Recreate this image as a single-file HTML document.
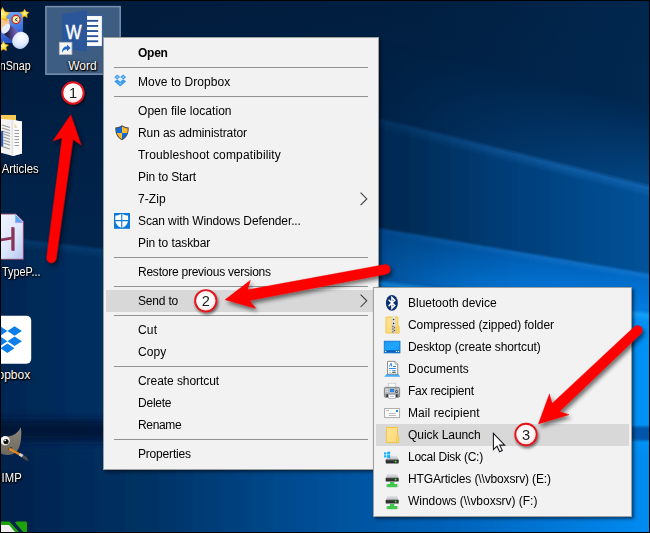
<!DOCTYPE html>
<html lang="en">
<head>
<meta charset="utf-8">
<title>Send to Quick Launch</title>
<style>
html,body{margin:0;padding:0;}
body{width:650px;height:533px;overflow:hidden;position:relative;background:#000;font-family:"Liberation Sans",sans-serif;font-size:12px;color:#000;}
#desk{position:absolute;left:0;top:0;width:650px;height:533px;overflow:hidden;background:#01214a;}
#wall{position:absolute;left:0;top:0;width:650px;height:533px;}
#frame{position:absolute;left:0;top:0;width:650px;height:533px;box-sizing:border-box;border:1px solid #000;pointer-events:none;}
.abs{position:absolute;}
svg{position:absolute;overflow:visible;}
.menu{position:absolute;background:#f2f2f2;border:1px solid #a0a0a0;box-sizing:border-box;box-shadow:2px 2px 3px rgba(0,0,0,.5);}
.mi{position:absolute;height:22px;line-height:22px;white-space:nowrap;font-size:12px;color:#000;will-change:transform;}
.sep{position:absolute;height:1px;background:#929292;}
.hl{position:absolute;background:#d8d8d8;height:22px;}
.lbl{position:absolute;color:#fff;font-size:12px;line-height:14px;white-space:nowrap;text-shadow:1px 1px 1px #000,0 0 3px rgba(0,0,0,.9),0 1px 2px #000;}
</style>
</head>
<body>
<div id="desk">
<svg id="wall" width="650" height="533" viewBox="0 0 650 533">
<defs>
<linearGradient id="w0" gradientUnits="userSpaceOnUse" x1="0" y1="0" x2="650" y2="0"><stop offset="0.0000" stop-color="#011a3a"/><stop offset="0.6462" stop-color="#011f40"/><stop offset="1.0000" stop-color="#01274e"/></linearGradient>
<linearGradient id="w0v" gradientUnits="userSpaceOnUse" x1="0" y1="0" x2="0" y2="230"><stop offset="0" stop-color="#012a58" stop-opacity="0"/><stop offset="1" stop-color="#012a58" stop-opacity="0.6"/></linearGradient>
<linearGradient id="w1g" gradientUnits="userSpaceOnUse" x1="500.0" y1="149.1" x2="519.3" y2="71.5"><stop offset="0" stop-color="#035298" stop-opacity="0.7"/><stop offset="1" stop-color="#035298" stop-opacity="0"/></linearGradient>
<linearGradient id="w1" gradientUnits="userSpaceOnUse" x1="0" y1="0" x2="650" y2="0"><stop offset="0.3538" stop-color="#01264e" stop-opacity="0"/><stop offset="0.5846" stop-color="#012850"/><stop offset="0.6462" stop-color="#012e5a"/><stop offset="0.7692" stop-color="#013c76"/><stop offset="0.9538" stop-color="#014e92"/><stop offset="1.0000" stop-color="#01539a"/></linearGradient>
<linearGradient id="w1s" gradientUnits="userSpaceOnUse" x1="500.0" y1="146.1" x2="496.6" y2="159.7"><stop offset="0" stop-color="#2882d7" stop-opacity="0"/><stop offset="0.3" stop-color="#2882d7" stop-opacity="0.38"/><stop offset="1" stop-color="#2882d7" stop-opacity="0"/></linearGradient>
<linearGradient id="w2" gradientUnits="userSpaceOnUse" x1="0" y1="0" x2="650" y2="0"><stop offset="0.3538" stop-color="#013264" stop-opacity="0"/><stop offset="0.5846" stop-color="#014284"/><stop offset="0.6462" stop-color="#014a8e"/><stop offset="0.8000" stop-color="#015cb0"/><stop offset="0.9538" stop-color="#0467c2"/><stop offset="1.0000" stop-color="#056ac8"/></linearGradient>
<linearGradient id="w2g" gradientUnits="userSpaceOnUse" x1="500.0" y1="248.8" x2="493.0" y2="290.2"><stop offset="0" stop-color="#0482e8" stop-opacity="0"/><stop offset="1" stop-color="#0482e8" stop-opacity="0.85"/></linearGradient>
<linearGradient id="w2s" gradientUnits="userSpaceOnUse" x1="500.0" y1="246.8" x2="498.5" y2="255.6"><stop offset="0" stop-color="#3c96e6" stop-opacity="0"/><stop offset="0.35" stop-color="#3c96e6" stop-opacity="0.25"/><stop offset="1" stop-color="#3c96e6" stop-opacity="0"/></linearGradient>
<linearGradient id="w3" gradientUnits="userSpaceOnUse" x1="0" y1="0" x2="650" y2="0"><stop offset="0.0000" stop-color="#012652"/><stop offset="0.1231" stop-color="#012e5e"/><stop offset="0.2308" stop-color="#013468"/><stop offset="0.4615" stop-color="#014e96"/><stop offset="0.6892" stop-color="#0066be"/><stop offset="0.9200" stop-color="#0086ec"/><stop offset="1.0000" stop-color="#0092f6"/></linearGradient>
<linearGradient id="w3s" gradientUnits="userSpaceOnUse" x1="500.0" y1="293.4" x2="498.6" y2="305.3"><stop offset="0" stop-color="#28afff" stop-opacity="0"/><stop offset="0.35" stop-color="#28afff" stop-opacity="0.5"/><stop offset="1" stop-color="#28afff" stop-opacity="0"/></linearGradient>
<linearGradient id="wb" gradientUnits="userSpaceOnUse" x1="0" y1="0" x2="650" y2="0"><stop offset="0.0000" stop-color="#01224c"/><stop offset="0.0462" stop-color="#01244f"/><stop offset="0.1077" stop-color="#022a58"/><stop offset="0.2308" stop-color="#013264"/><stop offset="0.4615" stop-color="#014c92"/><stop offset="0.6892" stop-color="#0062b8"/><stop offset="0.9200" stop-color="#0080e4"/><stop offset="1.0000" stop-color="#008cf2"/></linearGradient>
<linearGradient id="wband" gradientUnits="userSpaceOnUse" x1="0" y1="0" x2="650" y2="0"><stop offset="0.0000" stop-color="#001636"/><stop offset="0.3077" stop-color="#001a3e"/><stop offset="0.6154" stop-color="#012c60"/></linearGradient>
<linearGradient id="mf1g" gradientUnits="userSpaceOnUse" x1="380" y1="0" x2="650" y2="0"><stop offset="0" stop-color="#000"/><stop offset="1" stop-color="#fff"/></linearGradient><mask id="mf1"><rect x="0" y="0" width="650" height="533" fill="url(#mf1g)"/></mask>
<linearGradient id="mf2g" gradientUnits="userSpaceOnUse" x1="330" y1="0" x2="560" y2="0"><stop offset="0" stop-color="#000"/><stop offset="1" stop-color="#fff"/></linearGradient><mask id="mf2"><rect x="0" y="0" width="650" height="533" fill="url(#mf2g)"/></mask>
<linearGradient id="mf3g" gradientUnits="userSpaceOnUse" x1="100" y1="0" x2="500" y2="0"><stop offset="0" stop-color="#333"/><stop offset="1" stop-color="#fff"/></linearGradient><mask id="mf3"><rect x="0" y="0" width="650" height="533" fill="url(#mf3g)"/></mask>
<filter id="b2" x="-10%" y="-10%" width="120%" height="120%"><feGaussianBlur stdDeviation="1.3"/></filter>
<filter id="b5" x="-10%" y="-60%" width="120%" height="220%"><feGaussianBlur stdDeviation="4.5"/></filter>
</defs>
<rect x="0" y="0" width="650" height="533" fill="url(#w0)"/>
<rect x="0" y="0" width="650" height="533" fill="url(#w0v)"/>
<g mask="url(#mf1)"><polygon points="-10,-68.0 660,99.0 660,189.0 -10,22.0" fill="url(#w1g)"/></g>
<polygon points="-10,22.0 660,189.0 660,545 -10,545" fill="url(#w1)" filter="url(#b2)"/>
<g mask="url(#mf2)"><polygon points="-10,18.0 660,185.0 660,201.0 -10,34.0" fill="url(#w1s)"/></g>
<polygon points="-10,162.0 660,276.0 660,545 -10,545" fill="url(#w2)" filter="url(#b2)"/>
<g mask="url(#mf2)"><polygon points="-10,162.0 660,276.0 660,545 -10,545" fill="url(#w2g)"/><polygon points="-10,159.0 660,273.0 660,284.0 -10,170.0" fill="url(#w2s)"/></g>
<polygon points="-10,235.5 660,315.5 660,545 -10,545" fill="url(#w3)" filter="url(#b2)"/>
<g mask="url(#mf3)"><polygon points="-10,231.5 660,311.5 660,325.5 -10,245.5" fill="url(#w3s)"/></g>
<rect x="-10" y="448" width="670" height="100" fill="url(#wb)" filter="url(#b5)"/>
<rect x="-10" y="420" width="410" height="21" fill="url(#wband)" filter="url(#b5)"/>
<rect x="380" y="426.500" width="280" height="14" fill="#0356aa" filter="url(#b2)"/>
</svg>

<svg width="650" height="533" viewBox="0 0 650 533" style="left:0;top:0;">
<defs>
<linearGradient id="wsb" x1="0" y1="0" x2="0.3" y2="1"><stop offset="0" stop-color="#86b2f6"/><stop offset="0.55" stop-color="#4d82e6"/><stop offset="1" stop-color="#2a56c8"/></linearGradient>
<linearGradient id="wst" gradientUnits="userSpaceOnUse" x1="6" y1="36" x2="15" y2="27"><stop offset="0" stop-color="#2a2348"/><stop offset="0.5" stop-color="#5d4f9c"/><stop offset="1" stop-color="#8478c4"/></linearGradient>
<radialGradient id="wsc" cx="0.4" cy="0.35" r="0.8"><stop offset="0" stop-color="#ffffff"/><stop offset="0.6" stop-color="#dfe9ff"/><stop offset="1" stop-color="#9db8f2"/></radialGradient>
<radialGradient id="star" cx="0.5" cy="0.45" r="0.6"><stop offset="0" stop-color="#fff6a0"/><stop offset="0.6" stop-color="#ffd92a"/><stop offset="1" stop-color="#f0a010"/></radialGradient>
<linearGradient id="tpg" x1="0" y1="0" x2="1" y2="1"><stop offset="0" stop-color="#f4f7ff"/><stop offset="0.6" stop-color="#dde6fb"/><stop offset="1" stop-color="#b4c6f2"/></linearGradient>
<linearGradient id="gmp" x1="0" y1="0" x2="0" y2="1"><stop offset="0" stop-color="#8d877a"/><stop offset="1" stop-color="#6e695e"/></linearGradient>
<radialGradient id="eye" cx="0.45" cy="0.4" r="0.7"><stop offset="0" stop-color="#ffffff"/><stop offset="0.7" stop-color="#eeeeee"/><stop offset="1" stop-color="#aaaaaa"/></radialGradient>
<path id="st5" d="M0,-1 L0.31,-0.43 L0.95,-0.31 L0.5,0.16 L0.59,0.81 L0,0.53 L-0.59,0.81 L-0.5,0.16 L-0.95,-0.31 L-0.31,-0.43 Z"/>
</defs>
<rect x="45.900" y="6.600" width="74.300" height="67.600" fill="rgb(62,93,130)" stroke="rgb(120,144,176)" stroke-width="1.500"/>
<!-- WinSnap -->
<g>
<rect x="-8" y="12" width="31" height="31" rx="2" fill="url(#wsb)"/>
<path d="M-8,19 L9,19 L10,27 L2,31 L-8,31 Z" fill="#f9c493"/>
<use href="#st5" transform="translate(2.5,15) scale(7.5)" fill="url(#star)" stroke="#f0a818" stroke-width="0.08"/>
<use href="#st5" transform="translate(24.6,13.8) scale(4.6)" fill="url(#star)" stroke="#f0a818" stroke-width="0.1"/>
<circle cx="16" cy="19.5" r="4.1" fill="#f4f0a8" stroke="#d3201c" stroke-width="1.3"/>
<path d="M17.6,18 L15,19.6 L17.6,21.2" fill="none" stroke="#33305a" stroke-width="1"/>
<g transform="rotate(38 13 35)">
<rect x="1" y="29" width="20" height="11" rx="5" fill="url(#wst)"/>
<ellipse cx="3.5" cy="34.5" rx="3.4" ry="5.6" fill="#e6eeff"/>
<rect x="14.5" y="25.800" width="15.500" height="17.600" rx="7.700" fill="url(#wsc)"/>
</g>
<use href="#st5" transform="translate(3.5,46.5) scale(5.2)" fill="url(#star)" stroke="#f0a818" stroke-width="0.1"/>
</g>
<!-- Word -->
<g>
<rect x="86" y="15.6" width="16.3" height="30.8" fill="#ffffff" stroke="#2b579a" stroke-width="0.9"/>
<g fill="#2b579a"><rect x="87" y="19.9" width="11.2" height="1.9"/><rect x="87" y="25" width="11.2" height="1.9"/><rect x="87" y="30.1" width="11.2" height="1.9"/><rect x="87" y="35.2" width="11.2" height="1.9"/><rect x="87" y="40.3" width="11.2" height="1.9"/></g>
<polygon points="62,13.9 87,10.3 87,51.8 62,48.6" fill="#2b579a"/>
<text x="73.7" y="38.6" text-anchor="middle" transform="translate(73.7 0) scale(0.86 1) translate(-73.7 0)" style="font-family:'Liberation Sans',sans-serif;font-size:19.5px;" fill="#ffffff" stroke="#ffffff" stroke-width="0.5">W</text>
<rect x="59.3" y="42.3" width="12.6" height="12.2" fill="#f4f4f4" stroke="#b9b9b9" stroke-width="0.8"/>
<path d="M62,52.8 C62,48.5 64,46.6 67,46.6 L67,44.4 L70.6,47.9 L67,51.3 L67,49.2 C65,49.2 63.4,50 62,52.8 Z" fill="#1e64c8"/>
</g>
<!-- HTGArticles folder -->
<g>
<rect x="-6" y="115" width="22" height="7" fill="#f6ca55"/>
<polygon points="-6,118.3 13,120 22,121.5 22,153.4 13,156 -6,151" fill="#f3f3f3"/>
<polygon points="13,120 22,121.5 22,153.4 13,156" fill="#fbfbfb"/>
<rect x="11.6" y="120" width="1.6" height="36" fill="#e2e2e2"/>
<g stroke="#9a9a9a" stroke-width="1.2"><path d="M14.5,130.5h4.5M14.5,133.5h4.5M14.5,136.5h4.5M14.5,139.5h4.5M14.5,142.5h4.5M14.5,145.5h4.5"/><path d="M2,125 l8,2.5M2,128 l8,2.5M2,131 l8,2.5M3.5,134 l6.500,2.200M3.500,137 l6.500,2.200M3.500,140 l6.500,2.200M3.500,143 l6.500,2.200M2,146.500 l8,2.500"/></g>
<path d="M14.5,123 l3,5 h-3z" fill="#e9d9a8"/>
<rect x="1" y="131" width="2.2" height="15.5" fill="#2b5fb4"/>
</g>
<!-- TypePad -->
<g>
<path d="M-6,214 L16,214 L23.4,221.6 L23.4,259.3 L-6,259.3 Z" fill="url(#tpg)" stroke="#8d3f63" stroke-width="0.9"/>
<path d="M15.3,214.5 L15.3,222.4 L23,222.4 Z" fill="#5aa6f0"/>
<path d="M15.3,222.4 L23,222.4" stroke="#b08cf0" stroke-width="0.8"/>
<path d="M11.3,227.2 Q13,226.600 14.600,227.600 L14.600,250.500 Q13,251.500 11.300,250.200 Z" fill="#8a3358"/>
<path d="M-6,239.800 L11.500,236.800 L11.500,239.600 L-6,242.400 Z" fill="#8a3358"/>
</g>
<!-- Dropbox -->
<g>
<rect x="-17" y="315.8" width="48.2" height="47.9" rx="4.600" fill="#ffffff"/>
<g fill="#0d7fe9">
<polygon points="7.4,331 14.6,326.200 21.900,331 14.600,335.800"/>
<polygon points="7.4,331 0.200,326.200 -7.100,331 0.200,335.800"/>
<polygon points="7.4,341.200 14.600,336.400 21.900,341.200 14.600,346"/>
<polygon points="7.4,341.200 0.200,336.400 -7.100,341.200 0.200,346"/>
<polygon points="7.4,343.600 14.400,348.200 7.400,352.900 0.400,348.200"/>
</g>
</g>
<!-- GIMP -->
<g>
<path d="M20.800,427.200 C21.800,433 21.300,441 19.300,447 C17.500,452 13,455.300 7,455 C3,454.800 0,453.500 -3,451 L-3,438 C2,437 8,437 12,435.500 C16,434 19,431 20.800,427.200 Z" fill="url(#gmp)"/>
<circle cx="5.2" cy="440.800" r="4.700" fill="url(#eye)"/>
<circle cx="6" cy="441.500" r="2.600" fill="#111111"/>
<circle cx="5.2" cy="440.300" r="0.900" fill="#ffffff"/>
<path d="M8.500,449.500 Q10,447.500 11.800,447.800" stroke="#1c1a16" stroke-width="1.100" fill="none"/>
<path d="M10,449.300 L19.500,454.300" stroke="#e8871a" stroke-width="2.300" stroke-linecap="round"/>
<path d="M19.500,454.300 L23,456.300" stroke="#d8d8d8" stroke-width="3"/>
<path d="M22.800,455.200 C25.500,455 27.500,457.500 28.600,461 C26.500,460.500 23.500,459.500 22,457.500 Z" fill="#4a4a4a"/>
</g>
<!-- bottom icon -->
<g>
<polygon points="-2,521.600 9.400,521.600 19.500,532.500 -2,532.500" fill="#1fa20c"/>
<polygon points="-2,525 9,525 15.500,532.500 -2,532.500" fill="#f1f1f1"/>
<polygon points="15,522.400 16.600,521.600 26,521.600 27,522.600 27,532.500 23.500,532.500" fill="#1fa20c"/>
</g>
</svg>
<div class="lbl" style="right:619.4px;top:58.5px;transform:scaleX(0.89);transform-origin:100% 50%;">WinSnap</div>
<div class="lbl" style="right:611.3px;top:161.5px;transform:scaleX(0.94);transform-origin:100% 50%;">HTGArticles</div>
<div class="lbl" style="right:609.3px;top:264.5px;transform:scaleX(0.905);transform-origin:100% 50%;">TypeP...</div>
<div class="lbl" style="right:619.8px;top:367.5px;transform:scaleX(1.0);transform-origin:100% 50%;">Dropbox</div>
<div class="lbl" style="right:628.3px;top:470.5px;transform:scaleX(0.94);transform-origin:100% 50%;">GIMP</div>
<div class="lbl" style="left:68.200px;top:58.500px;">Word</div>

<div class="menu" style="left:103px;top:37px;width:276px;height:433px;"></div>
<div class="hl" style="left:106px;top:290px;width:270px;"></div>
<div class="sep" style="left:114px;top:67px;width:254px;"></div>
<div class="sep" style="left:114px;top:96px;width:254px;"></div>
<div class="sep" style="left:114px;top:257px;width:254px;"></div>
<div class="sep" style="left:114px;top:286px;width:254px;"></div>
<div class="sep" style="left:114px;top:315px;width:254px;"></div>
<div class="sep" style="left:114px;top:366px;width:254px;"></div>
<div class="sep" style="left:114px;top:439px;width:254px;"></div>
<div class="mi" style="left:138.1px;top:42px;letter-spacing:-0.243px;font-weight:700;">Open</div>
<div class="mi" style="left:138.1px;top:71px;letter-spacing:0.054px;">Move to Dropbox</div>
<div class="mi" style="left:138.1px;top:100px;letter-spacing:0.048px;">Open file location</div>
<div class="mi" style="left:138.1px;top:122px;letter-spacing:-0.091px;">Run as administrator</div>
<div class="mi" style="left:138.1px;top:144px;letter-spacing:0.155px;">Troubleshoot compatibility</div>
<div class="mi" style="left:138.1px;top:166px;letter-spacing:-0.115px;">Pin to Start</div>
<div class="mi" style="left:138.1px;top:188px;letter-spacing:0.091px;">7-Zip</div>
<div class="mi" style="left:138.1px;top:210px;letter-spacing:-0.113px;">Scan with Windows Defender...</div>
<div class="mi" style="left:138.1px;top:232px;letter-spacing:-0.084px;">Pin to taskbar</div>
<div class="mi" style="left:138.1px;top:261px;letter-spacing:-0.237px;">Restore previous versions</div>
<div class="mi" style="left:138.1px;top:290px;letter-spacing:-0.196px;">Send to</div>
<div class="mi" style="left:138.1px;top:319px;letter-spacing:0.171px;">Cut</div>
<div class="mi" style="left:138.1px;top:341px;letter-spacing:0.071px;">Copy</div>
<div class="mi" style="left:138.1px;top:370px;letter-spacing:-0.063px;">Create shortcut</div>
<div class="mi" style="left:138.1px;top:392px;letter-spacing:-0.231px;">Delete</div>
<div class="mi" style="left:138.1px;top:414px;letter-spacing:-0.343px;">Rename</div>
<div class="mi" style="left:138.1px;top:443px;letter-spacing:-0.190px;">Properties</div>
<svg width="650" height="533" viewBox="0 0 650 533" style="left:0;top:0;">
<!-- dropbox small -->
<g fill="#3c9bea">
<polygon points="114.2,77.2 117.200,74.400 120.200,77 117.200,79.600"/>
<polygon points="120.2,77 123.200,74.400 126.200,77.200 123.200,79.600"/>
<polygon points="114.2,81.400 117.200,79.200 120.200,81.400 117.200,83.800"/>
<polygon points="120.2,81.400 123.200,79.200 126.200,81.400 123.200,83.800"/>
<polygon points="116.6,83.600 120.200,81.800 123.800,83.600 120.200,86.400"/>
</g>
<g fill="#cfe6fb"><polygon points="116.2,77.100 117.200,76.200 118.200,77.100 117.200,78"/><polygon points="122.200,77.100 123.200,76.200 124.200,77.100 123.200,78"/><polygon points="119,79.400 120.200,78.400 121.400,79.400 120.200,80.600"/><polygon points="119.200,83.800 120.200,83.200 121.200,83.800 120.200,84.600"/></g>
<!-- UAC shield -->
<g>
<path d="M122,125.200 C124.500,126.800 126.600,127.400 128.700,127.500 C128.900,133.500 126.800,137.600 122,140.300 C117.200,137.600 115.100,133.500 115.300,127.500 C117.400,127.400 119.500,126.800 122,125.200 Z" fill="#4a4a4a"/>
<clipPath id="shc"><path d="M122,126.400 C124.200,127.700 126,128.200 127.700,128.400 C127.800,133.200 126,136.800 122,139.100 C118,136.800 116.200,133.200 116.300,128.400 C118,128.200 119.800,127.700 122,126.400 Z"/></clipPath>
<g clip-path="url(#shc)"><rect x="114" y="124" width="8" height="9" fill="#0b6bd8"/><rect x="122" y="124" width="8" height="9" fill="#fdb92c"/><rect x="114" y="133" width="8" height="9" fill="#fdb92c"/><rect x="122" y="133" width="8" height="9" fill="#0b6bd8"/></g>
</g>
<!-- defender -->
<g>
<rect x="114" y="213" width="16" height="15.800" fill="#0c79d8"/>
<path d="M115.400,215.600 C117.600,215.400 119.600,214.800 121.200,214 L121.200,220 L115.200,220 Z" fill="#ffffff"/>
<path d="M128,215.600 C125.800,215.400 123.800,214.800 122.300,214 L122.300,220 L128.200,220 Z" fill="#ffffff"/>
<path d="M115.300,221.200 L121.200,221.200 L121.200,227.800 C118,226.400 116,224.200 115.300,221.200 Z" fill="#ffffff"/>
<path d="M128.100,221.200 L122.300,221.200 L122.300,227.800 C125.400,226.400 127.400,224.200 128.100,221.200 Z" fill="#ffffff"/>
</g>
<!-- chevrons -->
<g fill="none" stroke="#3a3a3a" stroke-width="1.050">
<path d="M360.600,192.700 L366.800,198.900 L360.600,205.100"/>
<path d="M360.600,294.600 L366.800,300.800 L360.600,307"/>
</g>
</svg>

<div class="menu" style="left:373px;top:287px;width:259px;height:230px;"></div>
<div class="hl" style="left:376px;top:424px;width:253px;"></div>
<div class="mi" style="left:408.4px;top:292px;letter-spacing:-0.002px;">Bluetooth device</div>
<div class="mi" style="left:408.4px;top:314px;letter-spacing:-0.084px;">Compressed (zipped) folder</div>
<div class="mi" style="left:408.4px;top:336px;letter-spacing:-0.081px;">Desktop (create shortcut)</div>
<div class="mi" style="left:408.4px;top:358px;letter-spacing:0.022px;">Documents</div>
<div class="mi" style="left:408.4px;top:380px;letter-spacing:-0.216px;">Fax recipient</div>
<div class="mi" style="left:408.4px;top:402px;letter-spacing:0.071px;">Mail recipient</div>
<div class="mi" style="left:408.4px;top:424px;letter-spacing:-0.058px;">Quick Launch</div>
<div class="mi" style="left:408.4px;top:446px;letter-spacing:-0.253px;">Local Disk (C:)</div>
<div class="mi" style="left:408.4px;top:468px;letter-spacing:-0.135px;">HTGArticles (\\vboxsrv) (E:)</div>
<div class="mi" style="left:408.4px;top:490px;letter-spacing:-0.026px;">Windows (\\vboxsrv) (F:)</div>
<svg width="650" height="533" viewBox="0 0 650 533" style="left:0;top:0;">
<defs>
<linearGradient id="fold" x1="0" y1="0" x2="1" y2="1"><stop offset="0" stop-color="#fee394"/><stop offset="1" stop-color="#fbd978"/></linearGradient>
<linearGradient id="dsk" x1="0" y1="0" x2="1" y2="1"><stop offset="0" stop-color="#1a98f4"/><stop offset="0.5" stop-color="#1fa6fc"/><stop offset="1" stop-color="#1590ee"/></linearGradient>
<linearGradient id="drvtop" x1="0" y1="0" x2="0" y2="1"><stop offset="0" stop-color="#e4e6e8"/><stop offset="1" stop-color="#b9bcc0"/></linearGradient>
<g id="drv"><path d="M1.800,0 L11.200,0 L12.800,3.800 L0.200,3.800 Z" fill="url(#drvtop)"/><rect x="0" y="3.700" width="13" height="3.900" rx="0.700" fill="#2f2f2f"/><rect x="0.800" y="4.500" width="7.500" height="0.700" fill="#555"/><circle cx="9.900" cy="5.600" r="1" fill="#3de03a"/></g>
<g id="netdrv"><use href="#drv"/><rect x="4.200" y="8" width="4.400" height="2.400" fill="#3fc94c"/><rect x="1.400" y="10" width="10.200" height="3.200" fill="#3fc94c"/><rect x="0.300" y="10.300" width="1.100" height="2.700" fill="#c8c8c8"/><rect x="11.600" y="10.300" width="1.100" height="2.700" fill="#c8c8c8"/></g>
</defs>
<!-- bluetooth -->
<ellipse cx="391.900" cy="302.900" rx="6" ry="7.900" fill="#0b2f70"/>
<path d="M388.600,299.700 L394.800,305.600 L391.900,308.300 L391.900,297.500 L394.800,300.200 L388.600,306.100" fill="none" stroke="#ffffff" stroke-width="1.450" stroke-linejoin="miter"/>
<!-- zip folder -->
<g>
<path d="M386,317.100 L397.900,317.100 L397.900,326.200 L399.100,326.200 L399.100,333 L386,333 Z" fill="url(#fold)" stroke="#f1c645" stroke-width="1"/>
<path d="M396.700,326.600 L396.700,332.600" stroke="#f1c645" stroke-width="0.900"/>
<rect x="391.800" y="317" width="3.600" height="16.200" fill="#c9c9c9"/>
<rect x="392.300" y="317" width="2.600" height="8.400" fill="#e6e6e6"/>
<circle cx="393.600" cy="319.500" r="0.800" fill="#333"/><circle cx="393.600" cy="323.400" r="0.800" fill="#333"/>
<path d="M392.200,326.300h1.300M393.800,327.700h1.300M392.200,329.100h1.300M393.800,330.500h1.300M392.200,331.900h1.300" stroke="#5b4a1c" stroke-width="0.900"/>
</g>
<!-- desktop -->
<g>
<rect x="384.200" y="341.200" width="15.800" height="11.700" fill="url(#dsk)" stroke="#0b72cc" stroke-width="0.800"/>
<rect x="384.600" y="350.300" width="15" height="2.200" fill="#0a5fb2"/>
<circle cx="385.700" cy="351.400" r="0.650" fill="#fff"/><circle cx="396.400" cy="351.400" r="0.650" fill="#fff"/><circle cx="398.500" cy="351.400" r="0.650" fill="#fff"/>
</g>
<!-- documents -->
<g>
<path d="M384.200,376.800 L386.600,374 L398.400,374 L400.200,376.800 Z" fill="#45aef8"/>
<path d="M387.500,361.400 L395,361.400 L397.700,364.100 L397.700,374.200 L387.500,374.200 Z" fill="#ffffff" stroke="#7b7b7b" stroke-width="0.850"/>
<path d="M395,361.400 L395,364.100 L397.700,364.100" fill="#e8e8e8" stroke="#7b7b7b" stroke-width="0.600"/>
<path d="M389.200,366.600 L391.200,363.200 L391.800,366.600 M393,366.500 h3" stroke="#1b7fe0" stroke-width="0.900" fill="none"/>
<path d="M389,368.500 h6.900" stroke="#1b7fe0" stroke-width="0.900"/>
<path d="M389.200,370.500 h1.600 M389.200,372.300 h1.600" stroke="#a0a0a0" stroke-width="0.700"/>
<rect x="392.200" y="370" width="3.500" height="0.900" fill="#3a8cf0"/><rect x="392.200" y="371.700" width="3.500" height="1.200" fill="#3a6a3a"/>
</g>
<!-- fax -->
<g>
<rect x="388.300" y="383.200" width="7.400" height="4.800" fill="#fbfbfb" stroke="#c2c2c2" stroke-width="0.700"/>
<rect x="384.400" y="387.300" width="15.200" height="10" rx="1.200" fill="#b9bcbf" stroke="#707478" stroke-width="0.800"/>
<rect x="384.800" y="393.600" width="14.400" height="3.400" fill="#8f9498"/>
<rect x="390" y="388.800" width="4" height="3.200" fill="#2f86ea"/>
<circle cx="396.500" cy="391.400" r="1.500" fill="#4a4d50"/><circle cx="396.500" cy="391.400" r="0.600" fill="#c8c8c8"/>
<path d="M385.600,389.600h3M385.600,391.400h3" stroke="#f0f0f0" stroke-width="0.900" stroke-dasharray="1 0.500"/>
<circle cx="395.300" cy="388.500" r="0.500" fill="#35d030"/><circle cx="396.900" cy="388.500" r="0.500" fill="#f06060"/>
<rect x="386.500" y="394.400" width="1.300" height="2.600" fill="#1c1c1c"/><rect x="396.200" y="394.400" width="1.300" height="2.600" fill="#1c1c1c"/>
<rect x="388.500" y="394.600" width="7" height="3.900" rx="0.500" fill="#fdfdfd" stroke="#8a98ac" stroke-width="0.600"/>
<path d="M390.300,396.500h3.400" stroke="#a8a8a8" stroke-width="0.700"/>
</g>
<!-- mail -->
<g>
<rect x="384.600" y="408.600" width="15" height="9" fill="#ffffff" stroke="#a3a3a3" stroke-width="0.900"/>
<rect x="396" y="410" width="2" height="2" fill="#1b86f0"/>
<path d="M386.200,410.600h2.600" stroke="#9a9a9a" stroke-width="0.800"/>
<path d="M389,413.400h7M389,415.500h7" stroke="#a8a8a8" stroke-width="0.800"/>
</g>
<!-- quick launch folder -->
<g>
<path d="M386.400,427.500 L397.500,427.500 L397.500,436.400 L398.700,436.400 L398.700,442.600 L386.400,442.600 Z" fill="url(#fold)" stroke="#f1c645" stroke-width="1"/>
<path d="M396.700,436.800 L396.700,442.400" stroke="#f1c645" stroke-width="0.900"/>
</g>
<!-- local disk -->
<g>
<g fill="#12b2f8"><rect x="384" y="452.400" width="2.400" height="2.100"/><path d="M387.200,452 L390.100,451.400 L390.100,454.500 L387.200,454.500 Z"/><rect x="384" y="455.300" width="2.400" height="2.100"/><path d="M387.200,455.300 L390.100,455.300 L390.100,458.200 L387.200,457.700 Z"/></g>
<use href="#drv" transform="translate(385.700,455.800)"/>
<g fill="#12b2f8"><path d="M387.200,455.300 L390.100,455.300 L390.100,458.200 L387.200,457.700 Z"/></g>
</g>
<use href="#netdrv" transform="translate(385.700,474)"/>
<use href="#netdrv" transform="translate(385.700,496)"/>
</svg>

<svg width="650" height="533" viewBox="0 0 650 533" style="left:0;top:0;">
<path d="M493.400,433.400 L493.400,449.600 L497,446.200 L499.600,451.800 L502.300,450.600 L499.700,445.100 L504.700,445.100 Z" fill="#ffffff" stroke="#14141e" stroke-width="1.050" stroke-linejoin="miter"/>
</svg>

<svg width="650" height="533" viewBox="0 0 650 533" style="left:0;top:0;">
<defs>
<filter id="ash" x="-20%" y="-20%" width="140%" height="140%"><feGaussianBlur in="SourceAlpha" stdDeviation="2.2"/><feOffset dx="1.5" dy="3"/><feComponentTransfer><feFuncA type="linear" slope="0.55"/></feComponentTransfer><feMerge><feMergeNode/><feMergeNode in="SourceGraphic"/></feMerge></filter>
<filter id="csh" x="-30%" y="-30%" width="160%" height="160%"><feGaussianBlur in="SourceAlpha" stdDeviation="1.5"/><feOffset dx="1" dy="2"/><feComponentTransfer><feFuncA type="linear" slope="0.55"/></feComponentTransfer><feMerge><feMergeNode/><feMergeNode in="SourceGraphic"/></feMerge></filter>
<radialGradient id="cfill" cx="0.45" cy="0.4" r="0.62"><stop offset="0" stop-color="#ffffff"/><stop offset="0.7" stop-color="#fdf6f6"/><stop offset="1" stop-color="#f3d2d2"/></radialGradient>
</defs>
<g filter="url(#ash)" fill="#fe0000" stroke="#ee0005" stroke-width="0.4" stroke-linejoin="round">
<path d="M56.2,258.6 L73.0,139.2 L81.1,145.0 L70.8,114.7 L52.8,141.1 L62.1,137.7 L46.6,257.4 A4.8,4.8 0 0 0 56.2,258.6 Z"/>
<path d="M384.8,264.6 L247.6,289.8 L250.4,280.3 L225.0,299.7 L255.8,308.4 L249.6,300.6 L386.6,274.0 A4.8,4.8 0 0 0 384.8,264.6 Z"/>
<path d="M634.3,326.7 L552.1,403.4 L549.4,393.9 L538.4,423.9 L569.0,414.7 L559.6,411.4 L640.9,333.7 A4.8,4.8 0 0 0 634.3,326.7 Z"/>
</g>
<g filter="url(#csh)"><circle cx="73.0" cy="92.9" r="10.7" fill="url(#cfill)" stroke="#e3121c" stroke-width="1.9"/></g>
<text x="73.0" y="98.0" text-anchor="middle" style="font-family:'Liberation Sans',sans-serif;font-size:14.6px" fill="#202020">1</text>
<g filter="url(#csh)"><circle cx="205.8" cy="300.8" r="10.7" fill="url(#cfill)" stroke="#e3121c" stroke-width="1.9"/></g>
<text x="205.8" y="305.90000000000003" text-anchor="middle" style="font-family:'Liberation Sans',sans-serif;font-size:14.6px" fill="#202020">2</text>
<g filter="url(#csh)"><circle cx="526.0" cy="434.5" r="10.7" fill="url(#cfill)" stroke="#e3121c" stroke-width="1.9"/></g>
<text x="526.0" y="439.6" text-anchor="middle" style="font-family:'Liberation Sans',sans-serif;font-size:14.6px" fill="#202020">3</text>
</svg>
<div id="frame"></div>
</div>
</body>
</html>
